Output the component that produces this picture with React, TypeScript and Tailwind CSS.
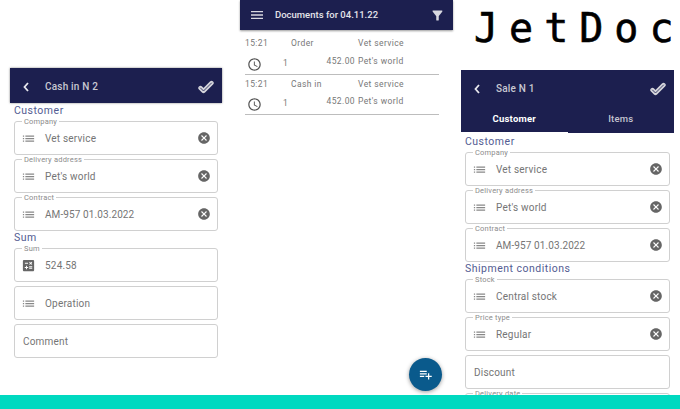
import React from 'react';
import {
  MdCalculate,
  MdCancel,
  MdFilterAlt,
  MdList,
  MdMenu,
  MdOutlineAccessTime,
  MdPlaylistAdd,
} from 'react-icons/md';

type FieldProps = {
  label?: string;
  value: string;
  icon?: 'list' | 'calc';
  clear?: boolean;
  valueClass?: string;
};

function Field({ label, value, icon, clear, valueClass = 'tracking-[0.2px]' }: FieldProps) {
  return (
    <div className="relative h-[34px] shrink-0 border border-[#d0d0d0] rounded-[3px] flex items-center pl-[8px] pr-[6px] text-[10px] text-[#757575]">
      {label && (
        <span className="absolute -top-[5px] left-[7px] bg-white px-[2px] text-[7.5px] leading-[10px] tracking-[0.2px] text-[#8c8c8c]">{label}</span>
      )}
      {icon === 'list' && <MdList className="w-[15px] h-[15px] text-[#888] -ml-[2px] mr-[9px] shrink-0" />}
      {icon === 'calc' && <MdCalculate className="w-[15px] h-[15px] text-[#666] -ml-[2px] mr-[9px] shrink-0" />}
      <span className={`flex-1 leading-none pt-[1px] ${valueClass}`}>{value}</span>
      {clear && <MdCancel className="w-[14px] h-[14px] text-[#666] shrink-0" />}
    </div>
  );
}

function Section({ children }: { children: React.ReactNode }) {
  return <div className="text-[10.5px] leading-[12px] tracking-[0.5px] text-[#535c92] px-[4px]">{children}</div>;
}

function AppBar({ title, size }: { title: string; size: string }) {
  return (
    <div className={`flex items-center px-[13px] text-[#c9c9d2] ${size}`}>
      <svg viewBox="0 0 6 10" className="w-[6px] h-[10px] mr-[16px]" fill="none" stroke="#e8e8ee" strokeWidth="1.8">
        <polyline points="5,1 1.5,5 5,9" />
      </svg>
      <span className="flex-1 text-[10px] font-medium tracking-[0.2px]">{title}</span>
      <svg viewBox="0 0 16 14" className="w-[16px] h-[14px] -mr-[5px]" fill="none" strokeLinecap="round" strokeLinejoin="round">
        <polyline points="2.5,8 5.5,11 13.5,3" stroke="#d6d6dc" strokeWidth="4.4" />
        <polyline points="2.5,8 5.5,11 13.5,3" stroke="#3a3d68" strokeWidth="1" />
      </svg>
    </div>
  );
}

function DocRow({ kind }: { kind: string }) {
  return (
    <div className="border-b border-[#bdbdbd] h-[40.5px] pt-[4px] text-[8.5px] leading-[11px] tracking-[0.4px] text-[#777] grid grid-cols-[38px_75px_1fr] ml-[5px] mr-[14px] whitespace-nowrap">
      <span>15:21</span>
      <span className="ml-[8px]">{kind}</span>
      <span>Vet service</span>
      <MdOutlineAccessTime className="w-[15px] h-[15px] ml-[2px] mt-[6px] text-[#555]" />
      <div className="flex justify-between pr-[3px] mt-[5px]">
        <span className="mt-[2px]">1</span>
        <span>452.00</span>
      </div>
      <span className="mt-[5px]">Pet's world</span>
    </div>
  );
}

export default function App() {
  return (
    <div className="relative w-[680px] h-[409px] overflow-hidden bg-white font-['Roboto',sans-serif]">
      <div className="flex h-[395px] overflow-hidden">
        <div className="w-[212px] ml-[10px] shrink-0 pt-[68px]">
          <div className="bg-[#1c1f4f] shadow-[0_0_2px_rgba(0,0,0,0.5)]">
            <AppBar title="Cash in N 2" size="h-[35px] pt-[2px]" />
          </div>
          <div className="pt-[2px] flex flex-col">
            <Section>Customer</Section>
            <div className="px-[4px] pt-[4px] flex flex-col gap-[4px]">
              <Field label="Company" value="Vet service" icon="list" clear />
              <Field label="Delivery address" value="Pet's world" icon="list" clear />
              <Field label="Contract" value="AM-957 01.03.2022" icon="list" clear valueClass="tracking-[0.1px]" />
            </div>
            <div className="pt-[1px]"><Section>Sum</Section></div>
            <div className="px-[4px] pt-[4px] flex flex-col gap-[4px]">
              <Field label="Sum" value="524.58" icon="calc" />
              <Field value="Operation" icon="list" />
              <Field value="Comment" />
            </div>
          </div>
        </div>

        <div className="w-[213px] ml-[18px] shrink-0">
          <div className="bg-[#1c1f4f] h-[30px] flex items-center pl-[9px] pr-[8px] shadow-[0_1px_2px_rgba(0,0,0,0.4)]">
            <MdMenu className="w-[16px] h-[16px] text-[#d8d8e0] mr-[10px]" />
            <span className="flex-1 text-[9.5px] font-medium text-[#e4e4ea]">Documents for 04.11.22</span>
            <MdFilterAlt className="w-[15px] h-[15px] text-[#d8d8e0]" />
          </div>
          <div className="pt-[4px]">
            <DocRow kind="Order" />
            <DocRow kind="Cash in" />
          </div>
        </div>

        <div className="w-[213px] ml-[8px] shrink-0">
          <div className="h-[70px] pl-[13px] pt-[4px] font-['DejaVu_Sans_Mono',monospace] text-[40px] leading-[48px] tracking-[11px] text-black whitespace-nowrap [-webkit-text-stroke:0.6px_black]">JetDoc</div>
          <div className="bg-[#1c1f4f] h-[63px]">
            <AppBar title="Sale N 1" size="h-[36px] pt-[1px]" />
            <div className="grid grid-cols-2 text-[9.5px] font-bold tracking-[0.2px] h-[27px]">
              <span className="flex items-center justify-center text-white border-b border-white">Customer</span>
              <span className="flex items-center justify-center text-[#c4c4cf] font-medium">Items</span>
            </div>
          </div>
          <div className="pt-[3px] flex flex-col">
            <Section>Customer</Section>
            <div className="px-[4px] pt-[4px] flex flex-col gap-[4px]">
              <Field label="Company" value="Vet service" icon="list" clear />
              <Field label="Delivery address" value="Pet's world" icon="list" clear />
              <Field label="Contract" value="AM-957 01.03.2022" icon="list" clear valueClass="tracking-[0.1px]" />
            </div>
            <div className="pt-[1px]"><Section>Shipment conditions</Section></div>
            <div className="px-[4px] pt-[4px] flex flex-col gap-[4px]">
              <Field label="Stock" value="Central stock" icon="list" clear />
              <Field label="Price type" value="Regular" icon="list" clear />
              <Field value="Discount" />
              <Field label="Delivery date" value="" />
            </div>
          </div>
        </div>
      </div>

      <div className="h-[14px] bg-[#00d9c0]" />

      <button className="absolute left-[409px] top-[358px] w-[33px] h-[33px] rounded-full bg-[#0a5a8c] flex items-center justify-center shadow-[0_1px_4px_rgba(0,0,0,0.4)]">
        <MdPlaylistAdd className="w-[15px] h-[15px] text-white" />
      </button>
    </div>
  );
}
